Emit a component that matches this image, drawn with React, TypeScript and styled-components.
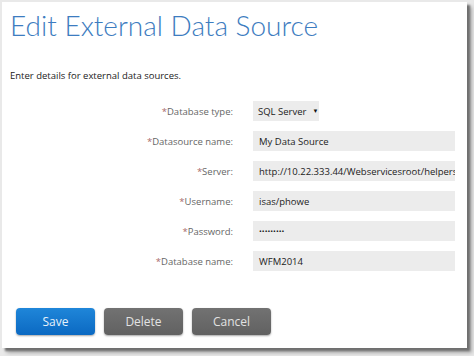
import React from "react";
import styled, { createGlobalStyle } from "styled-components";

const GlobalStyle = createGlobalStyle`
  html, body {
    margin: 0;
    padding: 0;
    background: #e9e9e9;
  }
  * {
    box-sizing: border-box;
  }
`;

const fields = [
  { label: "Database type:", value: "SQL Server", select: true },
  { label: "Datasource name:", value: "My Data Source" },
  { label: "Server:", value: "http://10.22.333.44/Webservicesroot/helpers.asmx" },
  { label: "Username:", value: "isas/phowe" },
  { label: "Password:", value: "•••••••••", password: true },
  { label: "Database name:", value: "WFM2014" },
];

const App = () => {
  return (
    <>
      <GlobalStyle />
      <Frame>
        <Panel>
          <Title>Edit External Data Source</Title>
          <Intro>Enter details for external data sources.</Intro>
          <Form>
            {fields.map((f) => (
              <React.Fragment key={f.label}>
                <Label>
                  <Star>*</Star>
                  {f.label}
                </Label>
                {f.select ? (
                  <Select>
                    {f.value}
                    <Caret>▼</Caret>
                  </Select>
                ) : (
                  <Input $password={f.password}>{f.value}</Input>
                )}
              </React.Fragment>
            ))}
          </Form>
          <Actions>
            <Button $primary>Save</Button>
            <Button>Delete</Button>
            <Button>Cancel</Button>
          </Actions>
        </Panel>
      </Frame>
    </>
  );
};

const Frame = styled.div`
  width: 474px;
  height: 356px;
  padding: 2px 0 0 2px;
  overflow: hidden;
`;
const Panel = styled.div`
  width: 465px;
  height: 346px;
  background: #ffffff;
  box-shadow: 3px 3px 2px #6f6f6f, 5px 5px 4px rgba(0, 0, 0, 0.25);
  padding: 0 0 0 8px;
  display: flex;
  flex-direction: column;
`;
const Title = styled.h1`
  margin: 3px 0 0 0;
  font-family: Lato, "Open Sans", sans-serif;
  font-weight: 300;
  font-size: 28px;
  line-height: 40px;
  color: #3d7cc0;
`;
const Intro = styled.p`
  margin: 25px 0 0 0;
  font-family: "Open Sans", sans-serif;
  font-size: 9.5px;
  line-height: 12px;
  color: #222;
`;
const Form = styled.div`
  margin-top: 19px;
  display: grid;
  grid-template-columns: 223px 202px;
  column-gap: 20px;
  row-gap: 10px;
  grid-auto-rows: 20px;
  align-items: center;
`;
const Label = styled.div`
  text-align: right;
  font-family: "Open Sans", sans-serif;
  font-size: 9.5px;
  color: #666;
`;
const Star = styled.span`
  color: #a86a6a;
`;
const Input = styled.div<{ $password?: boolean }>`
  height: 20px;
  background: #ececec;
  padding: 0 0 0 6px;
  display: flex;
  align-items: center;
  overflow: hidden;
  white-space: nowrap;
  font-family: "Open Sans", sans-serif;
  font-size: ${(p) => (p.$password ? "7.5px" : "9.5px")};
  color: #222;
`;
const Select = styled(Input)`
  width: 66px;
  padding: 0 0 0 5px;
  gap: 6px;
`;
const Caret = styled.span`
  font-size: 6px;
  color: #111;
`;
const Actions = styled.div`
  margin-top: 37px;
  padding-left: 6px;
  display: flex;
  gap: 9px;
`;
const Button = styled.button<{ $primary?: boolean }>`
  width: 79px;
  height: 27px;
  border: none;
  border-radius: 4px;
  background: ${(p) =>
    p.$primary
      ? "linear-gradient(#1f86d9, #0b69c2)"
      : "linear-gradient(#727272, #616161)"};
  box-shadow: 0 1px 2px rgba(0, 0, 0, 0.35);
  color: ${(p) => (p.$primary ? "#e6f1fb" : "#e2e2e2")};
  font-family: "Open Sans", sans-serif;
  font-size: 12px;
  cursor: pointer;
`;

export default App;
